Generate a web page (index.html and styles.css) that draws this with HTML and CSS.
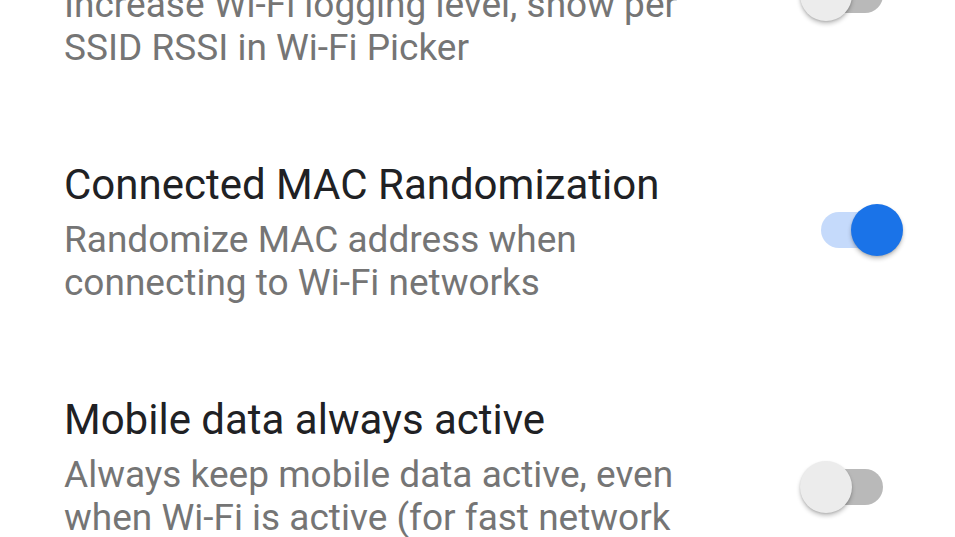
FILE: index.html
```html
<!DOCTYPE html>
<html lang="en">
<head>
<meta charset="utf-8">
<title>Developer options</title>
<link rel="stylesheet" href="styles.css">
</head>
<body>
<ul class="prefs">
  <li class="pref">
    <div class="pref-text">
      <div class="pref-title">Enable Wi-Fi Verbose Logging</div>
      <div class="pref-summary">Increase Wi-Fi logging level, show per SSID RSSI in Wi-Fi Picker</div>
    </div>
    <div class="switch"><span class="track"></span><span class="thumb"></span></div>
  </li>
  <li class="pref">
    <div class="pref-text">
      <div class="pref-title">Connected MAC Randomization</div>
      <div class="pref-summary">Randomize MAC address when connecting to Wi-Fi networks</div>
    </div>
    <div class="switch on"><span class="track"></span><span class="thumb"></span></div>
  </li>
  <li class="pref">
    <div class="pref-text">
      <div class="pref-title">Mobile data always active</div>
      <div class="pref-summary">Always keep mobile data active, even when Wi-Fi is active (for fast network switching).</div>
    </div>
    <div class="switch"><span class="track"></span><span class="thumb"></span></div>
  </li>
</ul>
</body>
</html>
```
FILE: styles.css
```css
html, body {
  margin: 0;
  padding: 0;
  height: 537px;
  overflow: hidden;
  background: #ffffff;
}

body {
  font-family: Roboto, "Noto Sans", sans-serif;
}

/* list is scrolled so the first item's title sits above the fold */
.prefs {
  list-style: none;
  margin: -123px 0 0 0;
  padding: 0;
}

.pref {
  display: flex;
  align-items: center;
  padding: 46px 51px 43px 64px;
}

.pref-text {
  flex: 1;
  margin-right: 94px;
}

.pref-title {
  font-size: 42px;
  line-height: 54px;
  color: #202124;
  margin-bottom: 6px;
  white-space: nowrap;
}

.pref-summary {
  font-size: 37px;
  line-height: 43px;
  color: #757575;
}

/* switch widget */
.switch {
  position: relative;
  flex: none;
  width: 104px;
  height: 52px;
  margin-bottom: 2px;
}

.switch .track {
  position: absolute;
  left: 21px;
  top: 8px;
  width: 62px;
  height: 36px;
  border-radius: 18px;
  background: #b9b9b9;
}

.switch .thumb {
  position: absolute;
  left: 0;
  top: 0;
  width: 52px;
  height: 52px;
  border-radius: 50%;
  background: #ececec;
  box-shadow: 0 3px 4px rgba(0, 0, 0, 0.22), 0 1px 2px rgba(0, 0, 0, 0.12);
}

.switch.on .track {
  background: #c5dafb;
}

.switch.on .thumb {
  left: 51px;
  background: #1a73e8;
}
```
